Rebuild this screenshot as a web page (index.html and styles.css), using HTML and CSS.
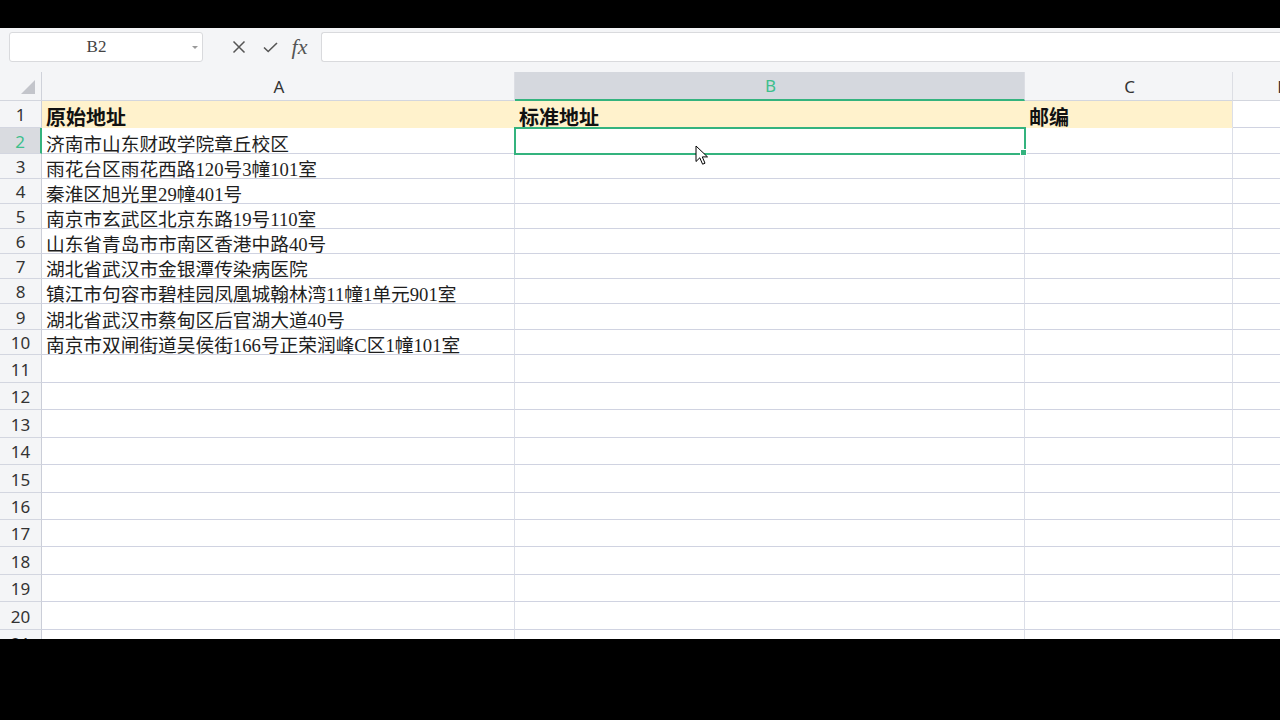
FILE: index.html
```html
<!DOCTYPE html>
<html lang="zh-CN">
<head>
<meta charset="utf-8">
<title>Sheet</title>
<link rel="stylesheet" href="styles.css">
</head>
<body>
<div class="letterbox-top"></div>
<div class="app">
  <div class="toolbar">
    <div class="namebox"><span class="nb-label">B2</span><span class="nb-caret"></span></div>
    <div class="fx-icons">
      <span class="ico"><svg width="14" height="14" viewBox="0 0 14 14"><path d="M1.5 1.5 L12.5 12.5 M12.5 1.5 L1.5 12.5" stroke="#555" stroke-width="1.5" fill="none"/></svg></span>
      <span class="ico"><svg width="15" height="11" viewBox="0 0 15 11"><path d="M1 5.5 L5.2 9.5 L14 1" stroke="#555" stroke-width="1.6" fill="none"/></svg></span>
      <span class="ico fx">fx</span>
    </div>
    <div class="formula"></div>
  </div>
  <div class="sheet">
    <div class="row hd">
      <div class="corner"><svg width="14" height="14" viewBox="0 0 14 14"><path d="M14 0 L14 14 L0 14 Z" fill="#c3c5cb"/></svg></div>
      <div class="ch ca">A</div>
      <div class="ch cb sel">B</div>
      <div class="ch cc">C</div>
      <div class="ch cd">D</div>
    </div>
    <div class="row h27">
      <div class="rh">1</div>
      <div class="cell ca y title">原始地址</div>
      <div class="cell cb y title">标准地址</div>
      <div class="cell cc y yl title">邮编</div>
      <div class="cell cd"></div>
    </div>
    <div class="row h26">
      <div class="rh cur">2</div>
      <div class="cell ca">济南市山东财政学院章丘校区</div>
      <div class="cell cb active"></div>
      <div class="cell cc"></div>
      <div class="cell cd"></div>
    </div>
    <div class="row h25">
      <div class="rh">3</div>
      <div class="cell ca">雨花台区雨花西路120号3幢101室</div>
      <div class="cell cb"></div><div class="cell cc"></div><div class="cell cd"></div>
    </div>
    <div class="row h25">
      <div class="rh">4</div>
      <div class="cell ca">秦淮区旭光里29幢401号</div>
      <div class="cell cb"></div><div class="cell cc"></div><div class="cell cd"></div>
    </div>
    <div class="row h25">
      <div class="rh">5</div>
      <div class="cell ca">南京市玄武区北京东路19号110室</div>
      <div class="cell cb"></div><div class="cell cc"></div><div class="cell cd"></div>
    </div>
    <div class="row h25">
      <div class="rh">6</div>
      <div class="cell ca">山东省青岛市市南区香港中路40号</div>
      <div class="cell cb"></div><div class="cell cc"></div><div class="cell cd"></div>
    </div>
    <div class="row h25">
      <div class="rh">7</div>
      <div class="cell ca">湖北省武汉市金银潭传染病医院</div>
      <div class="cell cb"></div><div class="cell cc"></div><div class="cell cd"></div>
    </div>
    <div class="row h25">
      <div class="rh">8</div>
      <div class="cell ca">镇江市句容市碧桂园凤凰城翰林湾11幢1单元901室</div>
      <div class="cell cb"></div><div class="cell cc"></div><div class="cell cd"></div>
    </div>
    <div class="row h26">
      <div class="rh">9</div>
      <div class="cell ca">湖北省武汉市蔡甸区后官湖大道40号</div>
      <div class="cell cb"></div><div class="cell cc"></div><div class="cell cd"></div>
    </div>
    <div class="row h25">
      <div class="rh">10</div>
      <div class="cell ca">南京市双闸街道吴侯街166号正荣润峰C区1幢101室</div>
      <div class="cell cb"></div><div class="cell cc"></div><div class="cell cd"></div>
    </div>
    <div class="row h28"><div class="rh">11</div><div class="cell ca"></div><div class="cell cb"></div><div class="cell cc"></div><div class="cell cd"></div></div>
    <div class="row h27"><div class="rh">12</div><div class="cell ca"></div><div class="cell cb"></div><div class="cell cc"></div><div class="cell cd"></div></div>
    <div class="row h28"><div class="rh">13</div><div class="cell ca"></div><div class="cell cb"></div><div class="cell cc"></div><div class="cell cd"></div></div>
    <div class="row h27"><div class="rh">14</div><div class="cell ca"></div><div class="cell cb"></div><div class="cell cc"></div><div class="cell cd"></div></div>
    <div class="row h28"><div class="rh">15</div><div class="cell ca"></div><div class="cell cb"></div><div class="cell cc"></div><div class="cell cd"></div></div>
    <div class="row h27"><div class="rh">16</div><div class="cell ca"></div><div class="cell cb"></div><div class="cell cc"></div><div class="cell cd"></div></div>
    <div class="row h27"><div class="rh">17</div><div class="cell ca"></div><div class="cell cb"></div><div class="cell cc"></div><div class="cell cd"></div></div>
    <div class="row h28"><div class="rh">18</div><div class="cell ca"></div><div class="cell cb"></div><div class="cell cc"></div><div class="cell cd"></div></div>
    <div class="row h27"><div class="rh">19</div><div class="cell ca"></div><div class="cell cb"></div><div class="cell cc"></div><div class="cell cd"></div></div>
    <div class="row h28"><div class="rh">20</div><div class="cell ca"></div><div class="cell cb"></div><div class="cell cc"></div><div class="cell cd"></div></div>
    <div class="row h27"><div class="rh">21</div><div class="cell ca"></div><div class="cell cb"></div><div class="cell cc"></div><div class="cell cd"></div></div>
  </div>
  <svg class="pointer" width="14" height="21" viewBox="0 0 14 21"><path d="M1 1 L1 16.5 L4.8 12.8 L7.6 19.2 L10 18.2 L7.3 11.9 L12.5 11.9 Z" fill="#fff" stroke="#000" stroke-width="1" stroke-linejoin="round"/></svg>
</div>
</body>
</html>
```

FILE: styles.css
```css
* { box-sizing: border-box; }

html, body {
  margin: 0;
  padding: 0;
}

body {
  width: 1280px;
  height: 720px;
  overflow: hidden;
  background: #000;
  font-family: "Liberation Serif", "Noto Sans CJK SC", serif;
}

.letterbox-top {
  height: 28px;
  background: #000;
}

.app {
  position: relative;
  height: 611px;
  background: #fff;
  overflow: hidden;
}

/* formula bar */
.toolbar {
  height: 44px;
  background: #f4f5f7;
  display: flex;
  align-items: flex-start;
  padding: 4px 0 0 9px;
}

.namebox {
  width: 194px;
  height: 30px;
  flex: none;
  background: #fff;
  border: 1px solid #d9dadd;
  border-radius: 3px;
  display: flex;
  align-items: center;
}

.nb-label {
  flex: 1;
  text-align: center;
  font: 17px "Liberation Serif", serif;
  color: #444;
  padding-right: 3px;
}

.nb-caret {
  width: 0;
  height: 0;
  margin-right: 4px;
  border-left: 3px solid transparent;
  border-right: 3px solid transparent;
  border-top: 3px solid #9a9a9a;
  margin-left: 6px;
}

.fx-icons {
  display: flex;
  align-items: center;
  height: 30px;
  margin-left: 27px;
  gap: 13px;
}

.ico {
  width: 18px;
  height: 20px;
  display: flex;
  align-items: center;
  justify-content: center;
}

.fx {
  width: 21px;
  font: italic 22px "Liberation Serif", serif;
  color: #555;
  margin-left: -3px;
}

.formula {
  flex: 1;
  height: 30px;
  margin-left: 11px;
  background: #fff;
  border: 1px solid #d9dadd;
  border-right: none;
  border-radius: 3px 0 0 3px;
}

/* sheet grid */
.sheet {
  display: flex;
  flex-direction: column;
  width: 1333px;
}

.row {
  display: flex;
  flex: none;
}

.hd { height: 29px; }
.h25 { height: 25px; }
.h26 { height: 26px; }
.h27 { height: 27px; }
.h28 { height: 28px; }

.corner {
  width: 42px;
  flex: none;
  background: #f4f5f7;
  border-right: 1px solid #cfd2da;
  border-bottom: 1px solid #d3d6de;
  display: flex;
  justify-content: flex-end;
  align-items: flex-end;
  padding: 0 6px 6px 0;
}

.ch {
  flex: none;
  background: #f4f5f7;
  border-right: 1px solid #dcdee4;
  border-bottom: 1px solid #d3d6de;
  display: flex;
  align-items: center;
  justify-content: center;
  font: 17px "Noto Sans", "Open Sans", sans-serif;
  color: #333;
  padding-left: 2px;
}

.ch.sel {
  background: #d5d8de;
  color: #3dbf8c;
  border-bottom: 2px solid #34b37e;
}

.ca { width: 473px; flex: none; }
.cb { width: 510px; flex: none; }
.cc { width: 208px; flex: none; }
.cd { width: 100px; flex: none; }

.rh {
  width: 42px;
  flex: none;
  background: #f4f5f7;
  border-right: 1px solid #cbced8;
  border-bottom: 1px solid #d3d6e0;
  display: flex;
  align-items: center;
  justify-content: center;
  font: 17px "Noto Sans", "Open Sans", sans-serif;
  color: #333;
  padding-top: 1px;
}

.rh.cur {
  background: #d9dbe0;
  color: #3dbf8c;
  border-right: 2px solid #34b37e;
}

.cell {
  border-right: 1px solid #dcdfe8;
  border-bottom: 1px solid #d0d3e1;
  padding-left: 4px;
  display: flex;
  align-items: flex-end;
  line-height: 17px;
  font-size: 18.7px;
  color: #1e1e1e;
  white-space: nowrap;
}

.cell.y {
  background: #fff2cc;
  border-color: #fff2cc;
}

.cell.yl {
  border-right-color: #dcdfe8;
}

.cell.title {
  font-weight: bold;
  font-size: 20px;
  line-height: 18px;
  color: #111;
}

.cell.active {
  position: relative;
  z-index: 2;
  outline: 2px solid #34b37e;
  outline-offset: -1px;
}

.cell.active::after {
  content: "";
  position: absolute;
  right: -3px;
  bottom: -3px;
  width: 5px;
  height: 5px;
  background: #34b37e;
  border: 1px solid #fff;
}

.pointer {
  position: absolute;
  left: 695px;
  top: 117px;
  z-index: 5;
}
```
